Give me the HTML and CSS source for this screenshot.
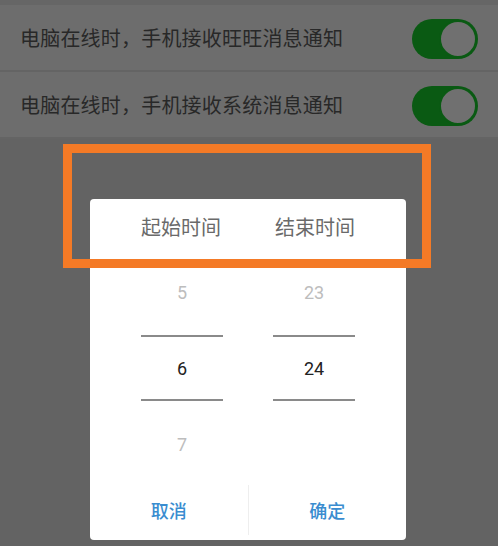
FILE: index.html
```html
<!DOCTYPE html>
<html lang="zh-CN">
<head>
    <meta charset="UTF-8">
    <meta name="viewport" content="width=device-width, initial-scale=1.0">
    <title>消息通知设置</title>
    <link rel="stylesheet" href="styles.css">
</head>
<body>
    <div class="settings">
        <div class="setting-row">
            <span class="setting-label">电脑在线时，手机接收旺旺消息通知</span>
            <span class="switch"><span class="knob"></span></span>
        </div>
        <div class="setting-row">
            <span class="setting-label">电脑在线时，手机接收系统消息通知</span>
            <span class="switch"><span class="knob"></span></span>
        </div>
    </div>

    <div class="dialog">
        <div class="dialog-head">
            <span class="col-title">起始时间</span>
            <span class="col-title">结束时间</span>
        </div>
        <div class="picker">
            <div class="picker-col">
                <div class="pick-item">5</div>
                <div class="pick-item selected">6</div>
                <div class="pick-item">7</div>
            </div>
            <div class="picker-col">
                <div class="pick-item">23</div>
                <div class="pick-item selected">24</div>
                <div class="pick-item"></div>
            </div>
        </div>
        <div class="dialog-actions">
            <button class="action">取消</button>
            <button class="action">确定</button>
        </div>
    </div>

    <div class="highlight-box"></div>
</body>
</html>
```

FILE: styles.css
```css
body {
    margin: 0;
    padding: 0;
    width: 498px;
    height: 546px;
    overflow: hidden;
    position: relative;
    background-color: #636363;
    font-family: Roboto, "Noto Sans CJK SC", sans-serif;
}
.settings {
    padding-top: 5px;
    background-color: #666666;
}
.setting-row {
    height: 65px;
    display: flex;
    align-items: center;
    justify-content: space-between;
    padding: 0 20px 0 20px;
    background-color: #6d6d6d;
    border-bottom: 2px solid #646464;
}
.setting-label {
    font-size: 20px;
    color: #282828;
    letter-spacing: 0.2px;
}
.switch {
    width: 66px;
    height: 40px;
    border-radius: 20px;
    background-color: #0a5a13;
    display: flex;
    justify-content: flex-end;
    box-sizing: border-box;
    margin-top: 2px;
}
.knob {
    width: 38px;
    height: 38px;
    margin: 1px;
    box-sizing: border-box;
    border-radius: 50%;
    background-color: #707070;
    border: 2px solid #0a5a13;
}
.dialog {
    position: absolute;
    left: 90px;
    top: 199px;
    width: 316px;
    height: 341px;
    background-color: #ffffff;
    border-radius: 4px;
    display: flex;
    flex-direction: column;
}
.dialog-head {
    height: 55px;
    display: flex;
    justify-content: center;
    align-items: center;
    gap: 52px;
}
.col-title {
    width: 82px;
    text-align: center;
    font-size: 20px;
    color: #6a6a6a;
    white-space: nowrap;
}
.picker {
    display: flex;
    justify-content: center;
    gap: 50px;
}
.picker-col {
    width: 82px;
    display: flex;
    flex-direction: column;
    align-items: stretch;
}
.pick-item {
    height: 76px;
    display: flex;
    align-items: center;
    justify-content: center;
    font-size: 18px;
    color: #bdbdbd;
}
.pick-item.selected {
    height: 62px;
    margin: 5px 0;
    border-top: 2px solid #8a8a8a;
    border-bottom: 2px solid #8a8a8a;
    color: #222222;
}
.dialog-actions {
    flex: 1;
    display: flex;
    padding: 3px 0 5px 0;
}
.action {
    flex: 1;
    border: none;
    background: none;
    padding: 0;
    font-family: "Noto Sans CJK SC", sans-serif;
    font-size: 18px;
    font-weight: 500;
    color: #3a8dd0;
}
.action + .action {
    border-left: 1px solid #eeeeee;
}
.highlight-box {
    position: absolute;
    left: 63px;
    top: 144px;
    width: 368px;
    height: 124px;
    box-sizing: border-box;
    border: 9px solid #f47a26;
}
```
